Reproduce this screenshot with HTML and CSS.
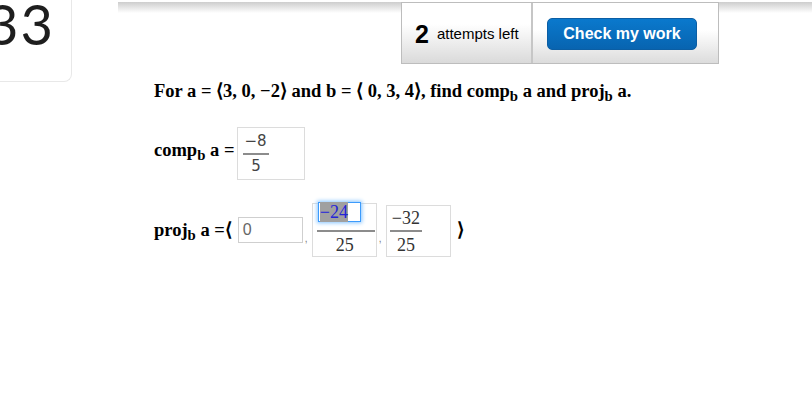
FILE: index.html
```html
<!DOCTYPE html>
<html>
<head>
<meta charset="utf-8">
<link rel="stylesheet" href="styles.css">
</head>
<body>
<div class="page">
  <aside class="sidebar">
    <div class="score-card"><span class="score">33</span></div>
  </aside>
  <main class="main">
    <header class="toolbar">
      <div class="actions">
        <div class="attempts"><span class="attempts-num">2</span><span class="attempts-label">attempts left</span></div>
        <div class="check-cell"><button class="check-btn">Check my work</button></div>
      </div>
    </header>
    <section class="question">
      <p class="prompt">For a = ⟨3, 0, −2⟩ and b = ⟨ 0, 3, 4⟩, find comp<sub>b</sub> a and proj<sub>b</sub> a.</p>
      <div class="row comp-row">
        <span class="label comp-label">comp<sub>b</sub> a =</span>
        <div class="answer-box comp-box">
          <div class="frac frac-sans"><span class="num">−8</span><span class="den">5</span></div>
        </div>
      </div>
      <div class="row proj-row">
        <span class="label">proj<sub>b</sub> a =⟨</span>
        <div class="answer-box input-box">0</div>
        <span class="sep">,</span>
        <div class="answer-box frac-box focus-box">
          <div class="focus-input"><span class="sel">−24</span></div>
          <div class="bar wide"></div>
          <div class="den-serif">25</div>
        </div>
        <span class="sep">,</span>
        <div class="answer-box frac-box plain-box">
          <div class="frac frac-serif"><span class="num">−32</span><span class="den">25</span></div>
        </div>
        <span class="close">⟩</span>
      </div>
    </section>
  </main>
</div>
</body>
</html>
```
FILE: styles.css
```css
body {
  margin: 0;
  background: #fff;
  font-family: "Liberation Serif", "Times New Roman", serif;
  color: #000;
}
.page {
  display: flex;
  width: 812px;
  height: 402px;
  overflow: hidden;
}
.sidebar {
  width: 118px;
  flex: none;
}
.score-card {
  margin-left: -40px;
  width: 112px;
  height: 82px;
  box-sizing: border-box;
  border: 1px solid #e8e8e8;
  border-top: none;
  border-radius: 0 0 8px 0;
  display: flex;
  justify-content: flex-end;
  align-items: flex-start;
  padding-right: 16px;
}
.score {
  font-family: Lato, "Open Sans", sans-serif;
  font-size: 56px;
  line-height: 1;
  margin-top: -4px;
  color: #1e1e1e;
  letter-spacing: 2px;
}
.main {
  flex: 1;
  padding-top: 2px;
}
.toolbar {
  height: 62px;
  background: linear-gradient(#cdcdcd, #ffffff) top left / 100% 11px no-repeat;
  display: flex;
  padding-left: 283px;
}
.actions {
  display: flex;
  height: 62px;
  box-sizing: border-box;
  border: 1px solid #bdbdbd;
  font-family: "Liberation Sans", Arial, sans-serif;
}
.attempts {
  width: 131px;
  box-sizing: border-box;
  border-right: 2px solid #c6c6c6;
  background: linear-gradient(#ffffff 35%, #dadada);
  display: flex;
  align-items: center;
  padding-left: 13px;
  gap: 8px;
}
.attempts-num {
  font-size: 25px;
  font-weight: bold;
  margin-top: 3px;
}
.attempts-label {
  font-size: 15px;
}
.check-cell {
  width: 185px;
  box-sizing: border-box;
  background: linear-gradient(#ffffff 45%, #dcdcdc);
  display: flex;
  align-items: center;
  padding-left: 14px;
}
.check-btn {
  width: 150px;
  height: 32px;
  margin-top: 2px;
  border: 1px solid #0b5ea4;
  border-radius: 5px;
  background: linear-gradient(#0a79cd, #0864b0);
  color: #fff;
  font-family: "Liberation Sans", Arial, sans-serif;
  font-weight: bold;
  font-size: 16px;
  padding: 0;
}
.question {
  padding-left: 36px;
  padding-top: 17px;
}
.prompt {
  margin: 0;
  font-weight: bold;
  font-size: 18.5px;
  line-height: 21px;
}
sub {
  font-size: 0.8em;
  line-height: 0;
  vertical-align: -0.25em;
}
.row {
  display: flex;
  align-items: center;
}
.label {
  font-weight: bold;
  font-size: 18.5px;
  line-height: 21px;
  white-space: nowrap;
}
.comp-row {
  margin-top: 25px;
  gap: 3px;
}
.comp-label {
  margin-bottom: 7px;
}
.answer-box {
  box-sizing: border-box;
  border: 1px solid #dcdcdc;
}
.comp-box {
  width: 68px;
  height: 53px;
  padding-left: 5px;
  display: flex;
  align-items: center;
}
.frac {
  display: inline-flex;
  flex-direction: column;
  align-items: center;
}
.frac .num {
  border-bottom: 2px solid #8c8c8c;
  text-align: center;
}
.frac-sans {
  font-family: "DejaVu Sans", sans-serif;
  font-size: 15px;
  color: #444;
  line-height: 18px;
}
.frac-sans .num {
  padding: 0 2px 3px 1px;
}
.frac-sans .den {
  padding-top: 2px;
}
.proj-row {
  margin-top: 23px;
}
.proj-row .label {
  margin-right: 6px;
}
.input-box {
  width: 65px;
  height: 26px;
  border-color: #cfcfcf;
  font-family: "Liberation Sans", Arial, sans-serif;
  font-size: 16px;
  color: #666;
  line-height: 24px;
  padding-left: 4px;
}
.sep {
  width: 9px;
  box-sizing: border-box;
  padding-left: 2px;
  padding-top: 18px;
  font-family: "Liberation Sans", sans-serif;
  font-size: 10px;
  line-height: 10px;
  color: #777;
}
.frac-box {
  width: 65px;
  box-sizing: border-box;
}
.focus-box {
  height: 54px;
  display: flex;
  flex-direction: column;
  padding: 0 2px 0 3px;
}
.focus-input {
  width: 43px;
  height: 20px;
  box-sizing: border-box;
  margin-top: -2px;
  margin-left: 2px;
  border: 1px solid #3c9bfc;
  box-shadow: 0 0 4px 1px #86c4ff;
  background: #fff;
  font-size: 18px;
  line-height: 18px;
  color: #2424d8;
  padding-left: 1px;
}
.sel {
  background: #a0a0a0;
}
.bar {
  height: 2px;
  background: #8c8c8c;
}
.bar.wide {
  width: 58px;
  margin-top: 8px;
  margin-left: 1px;
}
.den-serif {
  font-size: 18px;
  line-height: 20px;
  color: #333;
  text-align: center;
  padding-top: 3px;
}
.plain-box {
  height: 52px;
  margin-top: 2px;
  padding-left: 3px;
  display: flex;
  align-items: center;
}
.frac-serif {
  font-size: 18px;
  line-height: 20px;
  color: #333;
}
.frac-serif .num {
  padding: 0 2px 2px;
}
.frac-serif .den {
  padding-top: 3px;
}
.close {
  font-weight: bold;
  font-size: 18.5px;
  margin-left: 6px;
}
```
